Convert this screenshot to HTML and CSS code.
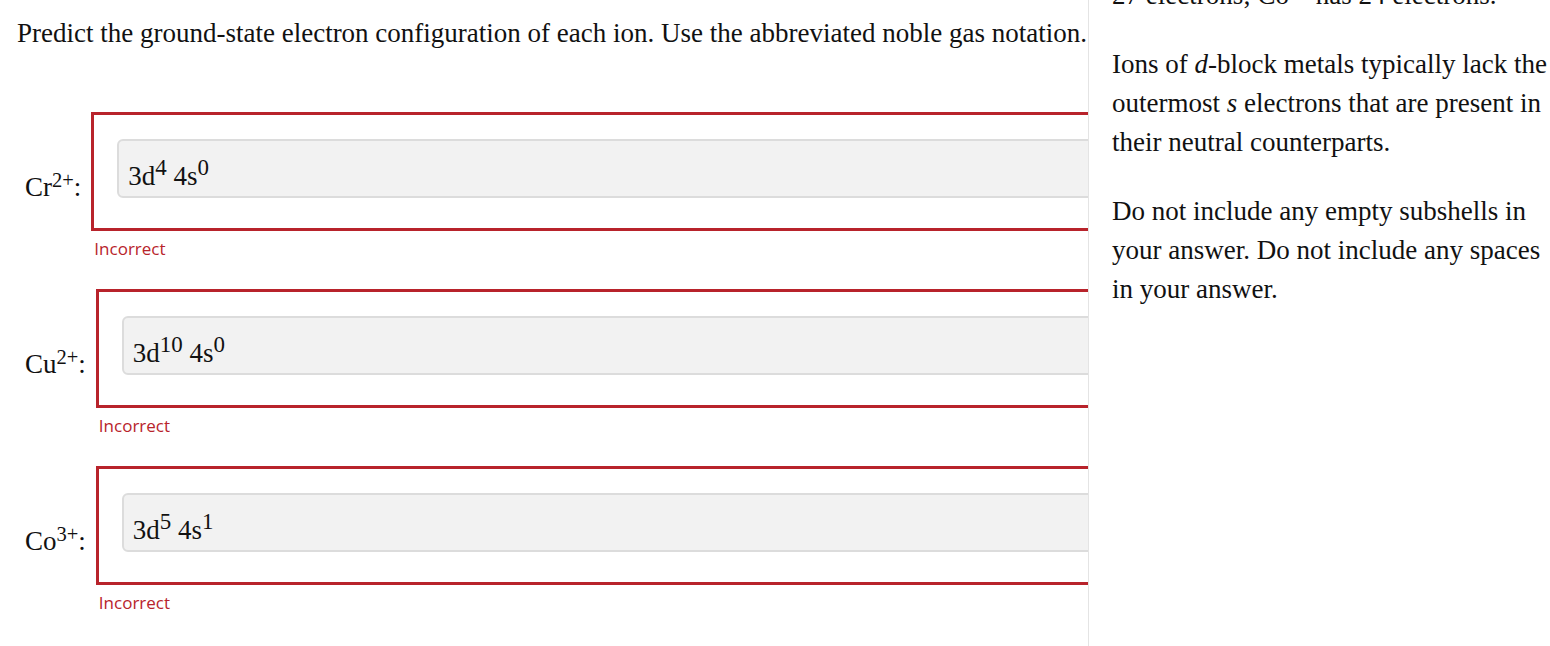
FILE: index.html
```html
<!DOCTYPE html>
<html lang="en">

<head>
    <meta charset="UTF-8">
    <meta name="viewport" content="width=device-width, initial-scale=1.0">
    <title>Electron Configurations</title>
    <link rel="stylesheet" href="styles.css">
</head>

<body>
    <div class="page">

        <!-- Question -->
        <div class="question">
            <p class="prompt">Predict the ground-state electron configuration of each ion. Use the abbreviated noble gas notation.</p>

            <div class="item">
                <span class="ion">Cr<sup>2+</sup>:</span>
                <div class="answer-col">
                    <div class="answer">
                        <div class="field">3d<sup>4</sup> 4s<sup>0</sup></div>
                    </div>
                    <div class="feedback">Incorrect</div>
                </div>
            </div>

            <div class="item">
                <span class="ion">Cu<sup>2+</sup>:</span>
                <div class="answer-col">
                    <div class="answer">
                        <div class="field">3d<sup>10</sup> 4s<sup>0</sup></div>
                    </div>
                    <div class="feedback">Incorrect</div>
                </div>
            </div>

            <div class="item">
                <span class="ion">Co<sup>3+</sup>:</span>
                <div class="answer-col">
                    <div class="answer">
                        <div class="field">3d<sup>5</sup> 4s<sup>1</sup></div>
                    </div>
                    <div class="feedback">Incorrect</div>
                </div>
            </div>
        </div>

        <!-- Hint panel -->
        <div class="hint">
            <p class="clipped">27 electrons; Co<sup>3+</sup> has 24 electrons.</p>
            <p>Ions of <i>d</i>-block metals typically lack the outermost <i>s</i> electrons that are present in their neutral counterparts.</p>
            <p>Do not include any empty subshells in your answer. Do not include any spaces in your answer.</p>
        </div>

    </div>
</body>

</html>
```

FILE: styles.css
```css
html,
body {
    margin: 0;
    height: 100%;
    overflow: hidden;
    background: white;
}

body {
    font-family: "Liberation Serif", "Times New Roman", serif;
    color: #111;
}

.page {
    display: flex;
    height: 646px;
}

.question {
    flex: 0 0 1088px;
    overflow: hidden;
    padding: 17px 0 0 17px;
    box-sizing: border-box;
}

.prompt {
    font-size: 27px;
    line-height: 32px;
    margin: 0 0 63px 0;
    white-space: nowrap;
}

.item {
    display: flex;
    align-items: flex-start;
    margin-bottom: 30px;
}

.ion {
    font-size: 27px;
    line-height: 30px;
    padding: 60px 0 0 8px;
    margin-right: 10px;
    white-space: nowrap;
}

.ion sup {
    font-size: 0.76em;
    vertical-align: 0.42em;
    line-height: 0;
}

.answer-col {
    flex: 0 0 1200px;
}

.answer {
    border: 3px solid #b8232b;
    height: 119px;
    padding: 24px 0 0 23px;
    box-sizing: border-box;
}

.field {
    background: #f2f2f2;
    border: 2px solid #dcdcdc;
    border-radius: 6px;
    height: 59px;
    box-sizing: border-box;
    padding: 20px 9px 0 9px;
    font-size: 27px;
    line-height: 30px;
}

.field sup {
    font-size: 0.85em;
    vertical-align: 0.42em;
    line-height: 0;
}

.feedback {
    font-family: "Open Sans", "Noto Sans", sans-serif;
    font-size: 17px;
    line-height: 20px;
    color: #b8232b;
    margin-top: 8px;
    padding-left: 3px;
}

.hint {
    flex: 1;
    border-left: 1px solid #e4e4e4;
    padding: 0 0 0 23px;
    font-size: 27px;
    line-height: 39px;
}

.hint p {
    margin: 0 0 30px 0;
}

.hint .clipped {
    margin-top: -24px;
    white-space: nowrap;
}

.hint sup {
    font-size: 0.7em;
    line-height: 0;
}
```
